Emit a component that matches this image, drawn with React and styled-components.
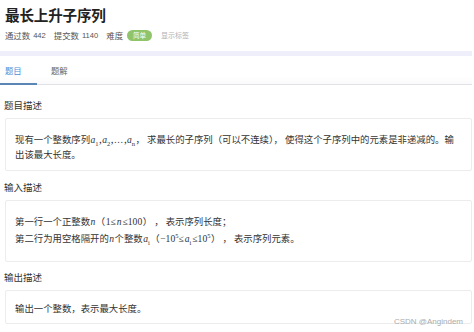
import styled, { createGlobalStyle } from 'styled-components';

const GlobalStyle = createGlobalStyle`
    html, body {
        margin: 0;
        padding: 0;
        background: #ffffff;
    }
    body {
        font-family: "Noto Sans CJK SC", "Noto Sans", sans-serif;
        color: #333333;
    }
`

const Page = styled.div`
    position: relative;
    width: 474px;
    height: 332px;
    padding-right: 2px;
    box-sizing: border-box;
    overflow: hidden;
`

const Header = styled.div`
    padding: 5px 5px 0;
    height: 51px;
    box-sizing: border-box;
`

const Title = styled.h1`
    margin: 0;
    font-size: 14.6px;
    line-height: 20px;
    font-weight: 600;
    color: #222222;
    letter-spacing: -0.2px;
`

const Meta = styled.div`
    display: flex;
    align-items: center;
    margin-top: 4px;
    height: 12px;
    font-size: 8.4px;
    color: #555555;
`

const MetaLabel = styled.span`
    margin-right: ${p => p.$gap || 3}px;
`

const MetaValue = styled.span`
    font-family: "Liberation Sans", Arial, sans-serif;
    font-size: 7.6px;
    margin-right: 8px;
`

const Badge = styled.span`
    display: inline-flex;
    align-items: center;
    justify-content: center;
    width: 25px;
    height: 11px;
    border-radius: 6px;
    background: #8fc46a;
    color: #ffffff;
    font-size: 6.5px;
    margin: 0 9px 0 2px;
`

const Muted = styled.span`
    color: #b3b3b3;
    font-size: 7px;
`

const Band = styled.div`
    height: 5px;
    background: #eeeffb;
`

const Tabs = styled.div`
    display: flex;
    height: 28px;
    border-bottom: 1px solid #e2e3e8;
    background: linear-gradient(#ffffff 70%, #fafafb);
`

const Tab = styled.div`
    display: flex;
    align-items: center;
    width: ${p => p.$active ? 37 : 40}px;
    padding-left: ${p => p.$active ? 5 : 14}px;
    box-sizing: border-box;
    font-size: 8.4px;
    color: ${p => p.$active ? '#4f8fd6' : '#666666'};
    border-bottom: 2px solid ${p => p.$active ? '#5a86b5' : 'transparent'};
    margin-bottom: -1px;
`

const Content = styled.div`
    padding: 0 0 0 5px;
`

const Heading = styled.h3`
    margin: ${p => p.$top}px 0 6px -1px;
    font-size: 9.5px;
    line-height: 14px;
    font-weight: 400;
    color: #333333;
`

const Box = styled.div`
    border: 1px solid #ececec;
    border-radius: 2px;
    padding: ${p => p.$pad};
    font-size: 9.4px;
    line-height: 14px;
    color: #333333;
`

const Para = styled.p`
    margin: 0;
    white-space: pre-wrap;
    & + & {
        margin-top: 1.5px;
    }
`

const M = styled.span`
    font-family: "Liberation Serif", "Times New Roman", serif;
    font-size: 9.6px;
    font-style: ${p => p.$up ? 'normal' : 'italic'};
    margin: 0 0.5px;

    sub, sup {
        font-size: 6.5px;
        font-style: normal;
        line-height: 0;
    }
`

const Watermark = styled.div`
    position: absolute;
    right: 11px;
    top: 317px;
    font-family: "Liberation Sans", Arial, sans-serif;
    font-size: 8px;
    color: #ababab;
`

const App = () => {
    return (
        <Page>
            <GlobalStyle />
            <Header>
                <Title>最长上升子序列</Title>
                <Meta>
                    <MetaLabel>通过数</MetaLabel>
                    <MetaValue>442</MetaValue>
                    <MetaLabel>提交数</MetaLabel>
                    <MetaValue>1140</MetaValue>
                    <MetaLabel $gap={2}>难度</MetaLabel>
                    <Badge>简单</Badge>
                    <Muted>显示标签</Muted>
                </Meta>
            </Header>
            <Band />
            <Tabs>
                <Tab $active>题目</Tab>
                <Tab>题解</Tab>
            </Tabs>
            <Content>
                <Heading $top={13}>题目描述</Heading>
                <Box $pad="13px 9px 9px">
                    <Para>
                        现有一个整数序列<M>a<sub>1</sub></M>,<M>a<sub>2</sub></M>,<M $up>…</M>,<M>a<sub>n</sub></M>， 求最长的子序列（可以不连续）， 使得这个子序列中的元素是非递减的。输出该最大长度。
                    </Para>
                </Box>
                <Heading $top={9}>输入描述</Heading>
                <Box $pad="13px 9px 15px">
                    <Para>
                        第一行一个正整数<M>n</M>（<M $up>1≤</M><M>n</M><M $up>≤100</M>） ， 表示序列长度；
                    </Para>
                    <Para>
                        第二行为用空格隔开的<M>n</M>个整数<M>a<sub>i</sub></M>（<M $up>−10<sup>5</sup>≤</M><M>a<sub>i</sub></M><M $up>≤10<sup>5</sup></M>） ， 表示序列元素。
                    </Para>
                </Box>
                <Heading $top={8}>输出描述</Heading>
                <Box $pad="10px 9px 8px">
                    <Para>输出一个整数，表示最大长度。</Para>
                </Box>
            </Content>
            <Watermark>CSDN @Angindem</Watermark>
        </Page>
    );
}

export default App;
